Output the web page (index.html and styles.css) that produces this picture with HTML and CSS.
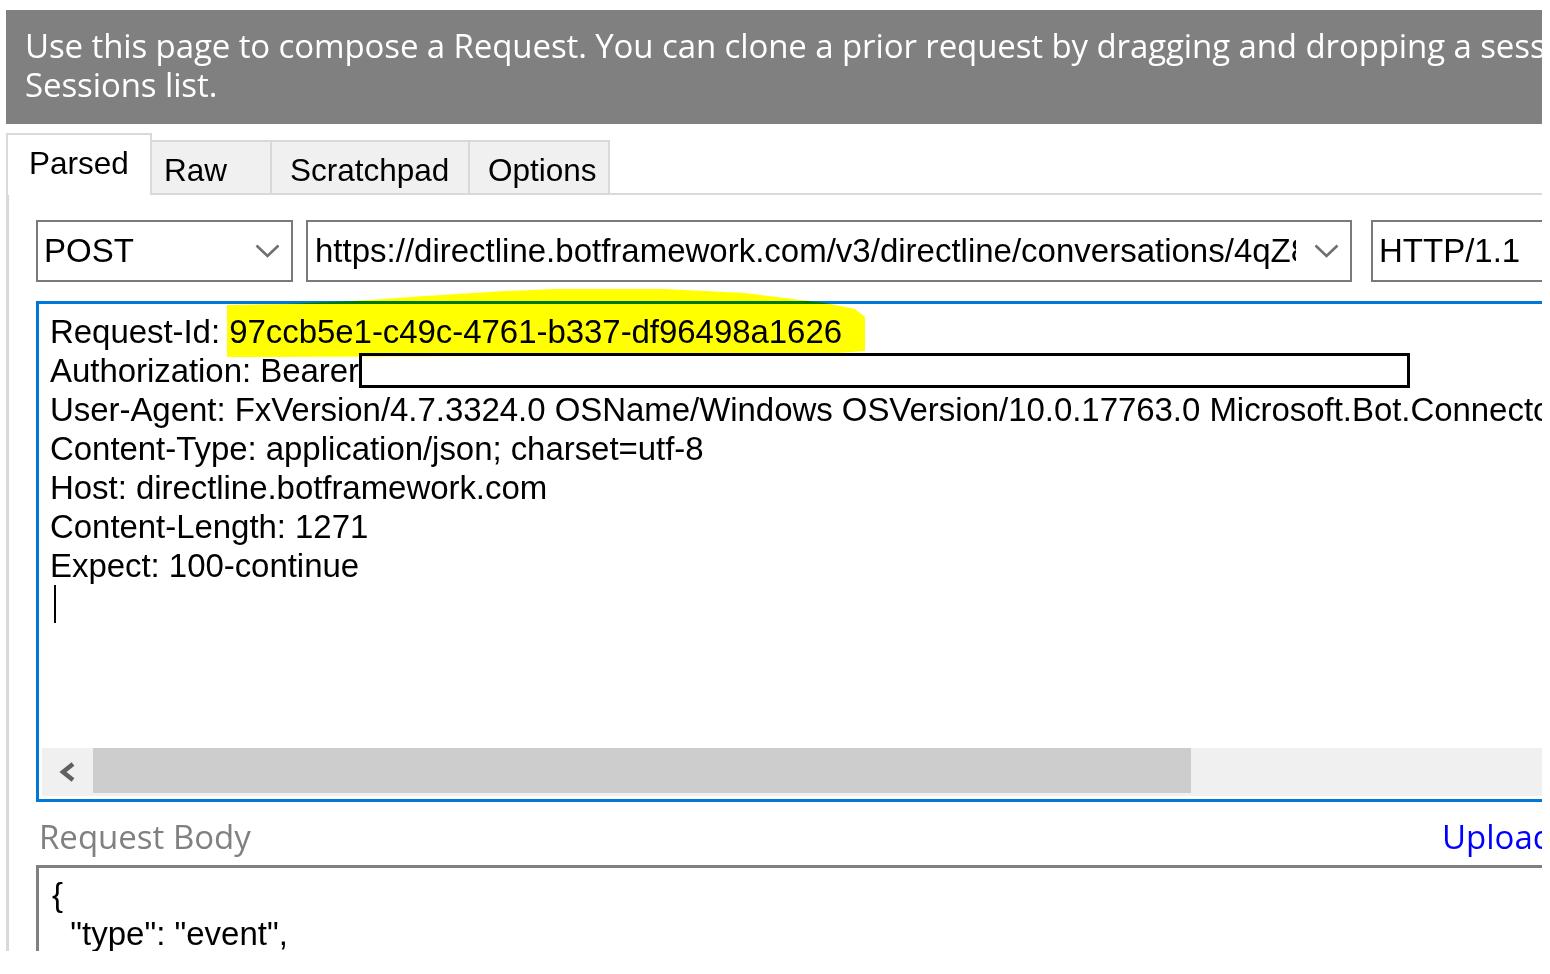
FILE: index.html
```html
<!DOCTYPE html>
<html lang="en">
<head>
  <meta charset="UTF-8" />
  <title>Composer</title>
  <link rel="stylesheet" href="styles.css">
</head>
<body>
  <div class="screen">
    <div class="banner">Use this page to compose a Request. You can clone a prior request by dragging and dropping a session from the Web<br/>Sessions list.</div>

    <div class="tabs">
      <div class="tab active">Parsed</div>
      <div class="tab raw">Raw</div>
      <div class="tab scratch">Scratchpad</div>
      <div class="tab options">Options</div>
    </div>

    <div class="panel">
      <div class="request-line">
        <div class="field method">
          <span>POST</span>
          <svg class="chevron" width="25" height="14" viewBox="0 0 25 14"><polyline points="1.5,1.5 12.5,12 23.5,1.5" /></svg>
        </div>
        <div class="field url">
          <span class="url-text">https://directline.botframework.com/v3/directline/conversations/4qZ8xXPuGmR2eVZzQq1sWk-f</span>
          <svg class="chevron" width="25" height="14" viewBox="0 0 25 14"><polyline points="1.5,1.5 12.5,12 23.5,1.5" /></svg>
        </div>
        <div class="field version"><span>HTTP/1.1</span></div>
      </div>

      <div class="headers">
        <div class="header-text">
          <div>Request-Id: 97ccb5e1-c49c-4761-b337-df96498a1626</div>
          <div>Authorization: Bearer<span class="redacted"></span></div>
          <div>User-Agent: FxVersion/4.7.3324.0 OSName/Windows OSVersion/10.0.17763.0 Microsoft.Bot.Connector.DirectLine/3.0.2</div>
          <div>Content-Type: application/json; charset=utf-8</div>
          <div>Host: directline.botframework.com</div>
          <div>Content-Length: 1271</div>
          <div>Expect: 100-continue</div>
          <div><span class="caret"></span></div>
        </div>
        <div class="hscroll">
          <div class="scroll-arrow">
            <svg width="20" height="22" viewBox="0 0 20 22"><polyline points="15,3 5,11 15,19" /></svg>
          </div>
          <div class="scroll-thumb"></div>
        </div>
        <!-- marker highlight drawn over the request id -->
        <svg class="marker" width="642" height="72" viewBox="0 0 642 72">
          <polygon points="2,18 60,17 130,14 200,9 280,4 330,2 440,2 520,6 560,11 600,16 630,22 640,30 640,64 600,67 300,69 2,70" />
        </svg>
      </div>

      <div class="body-label">
        <span class="label">Request Body</span>
        <a href="#" class="upload">Upload file...</a>
      </div>

      <div class="body-box">
<pre>{
  "type": "event",
  "name": "webchat/join",</pre>
      </div>
    </div>
  </div>
</body>
</html>
```

FILE: styles.css
```css
body {
  margin: 0;
  padding: 0;
  background-color: #fff;
  overflow: hidden;
}

.screen {
  width: 1542px;
  height: 951px;
  overflow: hidden;
  background-color: #fff;
  font-family: 'Liberation Sans', Arial, sans-serif;
  color: #000;
}

.banner {
  width: 1700px;
  margin: 10px 0 0 6px;
  height: 114px;
  box-sizing: border-box;
  padding: 16px 0 0 19px;
  background-color: #808080;
  color: #fff;
  font-family: 'Open Sans', sans-serif;
  font-size: 33px;
  line-height: 39px;
  letter-spacing: -0.1px;
  white-space: nowrap;
  overflow: hidden;
}

.tabs {
  display: flex;
  align-items: flex-end;
  margin: 10px 0 0 6px;
  height: 59px;
  border-bottom: 2px solid #d9d9d9;
}

.tab {
  flex-shrink: 0;
  box-sizing: border-box;
  height: 53px;
  padding: 8px 0 0 18px;
  background-color: #f0f0f0;
  border-top: 2px solid #d9d9d9;
  border-right: 2px solid #d9d9d9;
  font-size: 31.5px;
  line-height: 40px;
  white-space: nowrap;
}

.tab.active {
  position: relative;
  width: 146px;
  height: 62px;
  margin-bottom: -2px;
  padding-left: 21px;
  background-color: #fff;
  border-left: 2px solid #d9d9d9;
}

.tab.raw {
  width: 120px;
  padding-left: 12px;
}

.tab.scratch {
  width: 198px;
}

.tab.options {
  width: 140px;
}

.panel {
  width: 1700px;
  margin-left: 6px;
  height: 800px;
  border-left: 3px solid #d9d9d9;
  padding: 25px 0 0 27px;
}

.request-line {
  display: flex;
  height: 62px;
}

.field {
  flex-shrink: 0;
  box-sizing: border-box;
  height: 62px;
  display: flex;
  align-items: center;
  justify-content: space-between;
  border: 2px solid #7a7a7a;
  padding: 0 11px 0 6px;
  font-size: 33px;
  white-space: nowrap;
}

.method {
  width: 257px;
}

.url {
  width: 1046px;
  margin-left: 13px;
  padding-left: 7px;
}

.url-text {
  flex-shrink: 0;
  display: block;
  width: 981px;
  overflow: hidden;
}

.version {
  width: 320px;
  margin-left: 19px;
  justify-content: flex-start;
}

.chevron {
  flex-shrink: 0;
}

.chevron polyline {
  fill: none;
  stroke: #707070;
  stroke-width: 2.6;
}

.headers {
  position: relative;
  box-sizing: border-box;
  height: 501px;
  margin-top: 19px;
  border: 3px solid #0078d7;
  display: flex;
  flex-direction: column;
}

.header-text {
  flex: 1;
  padding: 8px 0 0 11px;
  font-size: 33px;
  line-height: 39px;
  letter-spacing: -0.05px;
  white-space: nowrap;
  overflow: hidden;
}

.redacted {
  display: inline-block;
  box-sizing: border-box;
  width: 1051px;
  height: 35px;
  border: 3px solid #000;
  vertical-align: -6px;
}

.caret {
  display: inline-block;
  width: 2px;
  height: 38px;
  margin-left: 4px;
  background-color: #000;
  vertical-align: top;
}

.hscroll {
  display: flex;
  height: 48px;
  margin: 0 3px 3px 3px;
  background-color: #f0f0f0;
}

.scroll-arrow {
  width: 51px;
  display: flex;
  align-items: center;
  justify-content: center;
}

.scroll-arrow polyline {
  fill: none;
  stroke: #606060;
  stroke-width: 4.5;
}

.scroll-thumb {
  width: 1098px;
  height: 45px;
  background-color: #cdcdcd;
}

.marker {
  position: absolute;
  left: 186px;
  top: -17px;
  mix-blend-mode: multiply;
}

.marker polygon {
  fill: #ffff00;
}

.body-label {
  display: grid;
  grid-template-columns: 1403px auto;
  align-items: center;
  height: 63px;
  padding: 6px 0 0 3px;
  box-sizing: border-box;
  font-family: 'Open Sans', sans-serif;
  font-size: 33px;
  white-space: nowrap;
}

.label {
  color: #808080;
}

.upload {
  color: #0000ff;
  text-decoration: none;
}

.body-box {
  height: 200px;
  border: 3px solid #808080;
  border-right: none;
}

.body-box pre {
  margin: 0;
  padding: 7px 0 0 13px;
  font-family: 'Liberation Sans', Arial, sans-serif;
  font-size: 33px;
  line-height: 39px;
}
```
